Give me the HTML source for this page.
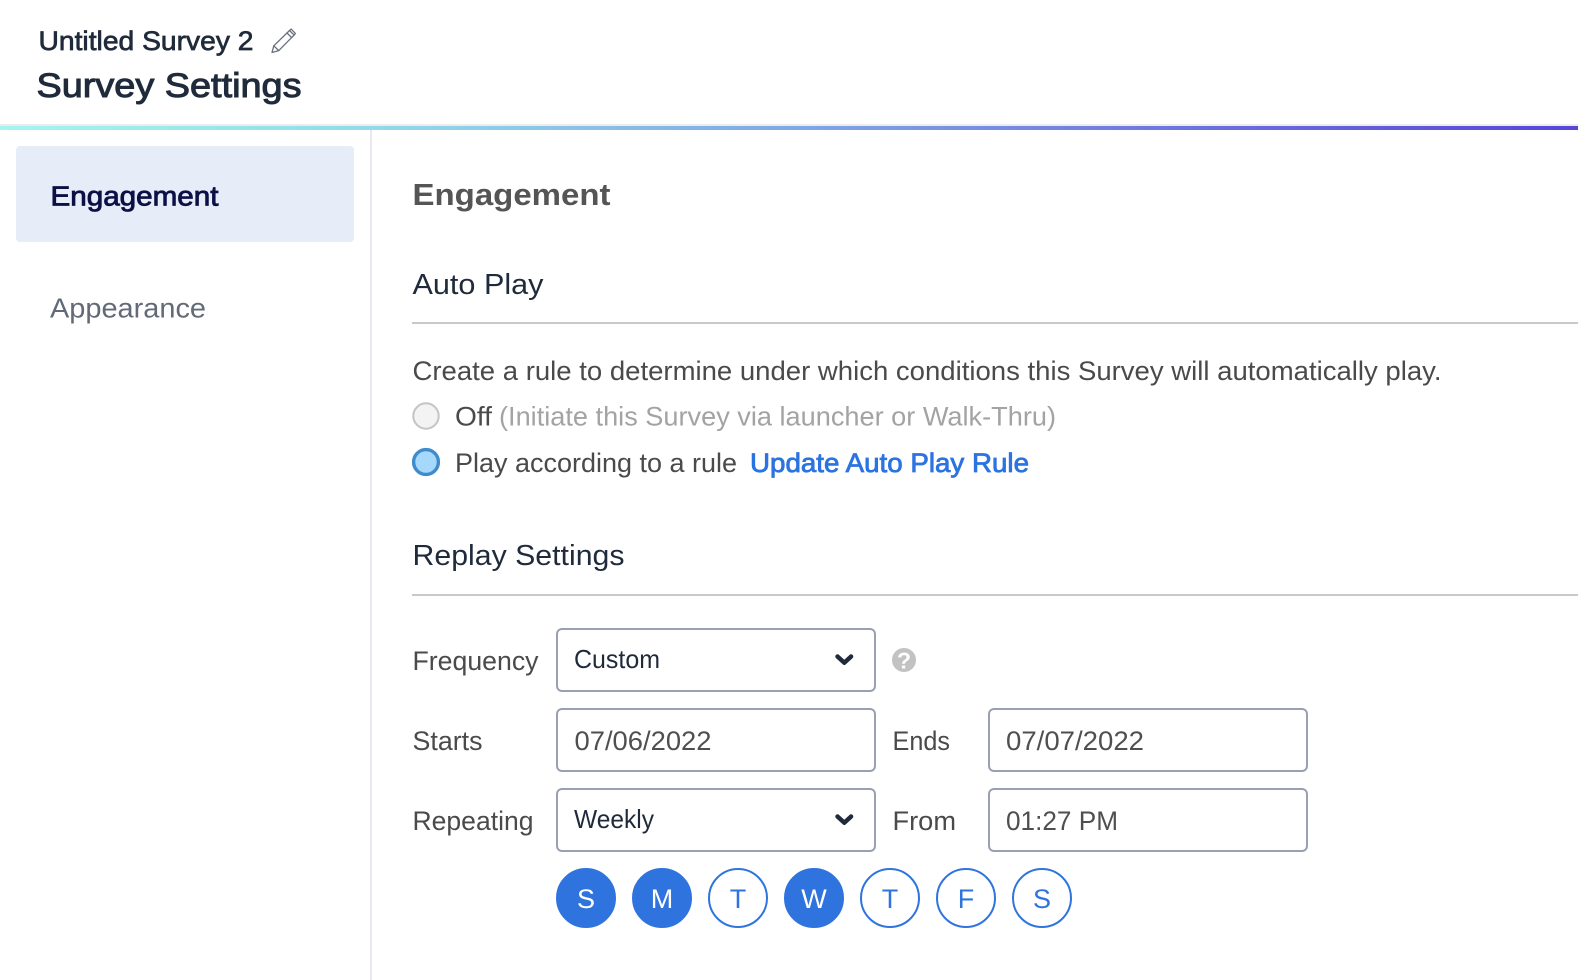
<!DOCTYPE html>
<html lang="en">
<head>
<meta charset="utf-8">
<title>Survey Settings</title>
<style>
html,body{margin:0;padding:0;background:#fff;width:1578px;height:980px;overflow:hidden}
svg{display:block}
text{font-family:"Liberation Sans",sans-serif;font-size:27px;fill:#4a4a4a}
.semi{stroke-width:.55px;paint-order:stroke}
</style>
</head>
<body>
<svg width="1578" height="980" viewBox="0 0 1578 980" xmlns="http://www.w3.org/2000/svg">
<defs>
<linearGradient id="bar" x1="0" x2="1" y1="0" y2="0">
<stop offset="0" stop-color="#a3f6ee"/>
<stop offset=".25" stop-color="#90d8e9"/>
<stop offset=".5" stop-color="#80a8e5"/>
<stop offset=".8" stop-color="#6a68de"/>
<stop offset="1" stop-color="#5546d9"/>
</linearGradient>
</defs>

<!-- Header -->
<text x="38.5" y="50" lengthAdjust="spacingAndGlyphs" textLength="215" class="semi" style="font-size:27px;fill:#1f2a3a;stroke:#1f2a3a;stroke-width:.7px">Untitled Survey 2</text>
<g fill="none" stroke="#6b7080" stroke-width="1.3" stroke-linejoin="round" stroke-linecap="round">
<path d="M272 52.5l1.8-6.7L289.5 30.5l4.6 4.6L278.8 50.6z"/>
<path d="M273.8 45.8l5 4.8M287 33l4.6 4.6M289.5 30.5l1.6-1.4 4.3 4.3-1.3 1.7"/>
</g>
<text x="36.5" y="97" lengthAdjust="spacingAndGlyphs" textLength="265" class="semi" style="font-size:34px;fill:#1f2a3a;stroke:#1f2a3a;stroke-width:1px">Survey Settings</text>

<rect x="0" y="124" width="1578" height="2" fill="#ececec"/>
<rect x="0" y="126" width="1578" height="4" fill="url(#bar)"/>

<!-- Sidebar -->
<rect x="370" y="130" width="2" height="850" fill="#e8e8ee"/>
<rect x="16" y="146" width="338" height="96" rx="4" fill="#e6ecf8"/>
<text x="50.5" y="205.5" lengthAdjust="spacingAndGlyphs" textLength="168" class="semi" style="font-size:28px;fill:#0b1145;stroke:#0b1145;stroke-width:.85px">Engagement</text>
<text x="50" y="317.5" lengthAdjust="spacingAndGlyphs" textLength="156" style="font-size:28px;fill:#626a78">Appearance</text>

<!-- Main -->
<text x="412.5" y="205" lengthAdjust="spacingAndGlyphs" textLength="198" style="font-size:31px;font-weight:bold;fill:#555">Engagement</text>

<text x="412.5" y="294" lengthAdjust="spacingAndGlyphs" textLength="131" style="font-size:29px;fill:#1f2a3a">Auto Play</text>
<rect x="412" y="322" width="1166" height="2" fill="#c9c9c9"/>

<text x="412.5" y="380" lengthAdjust="spacingAndGlyphs" textLength="1029" style="fill:#4a4a4a">Create a rule to determine under which conditions this Survey will automatically play.</text>

<circle cx="426" cy="416" r="12.7" fill="#f3f3f3" stroke="#c4c4c4" stroke-width="2"/>
<text x="455" y="425.5" lengthAdjust="spacingAndGlyphs" textLength="37" style="fill:#4a4a4a">Off</text>
<text x="499" y="425.5" lengthAdjust="spacingAndGlyphs" textLength="557" style="fill:#a3a3a3">(Initiate this Survey via launcher or Walk-Thru)</text>

<circle cx="426" cy="462" r="12.4" fill="#a6d8fc" stroke="#3f8ccd" stroke-width="3.4"/>
<text x="455" y="472" lengthAdjust="spacingAndGlyphs" textLength="282" style="fill:#4a4a4a">Play according to a rule</text>
<text x="750" y="472" lengthAdjust="spacingAndGlyphs" textLength="279" class="semi" style="fill:#2b73e0;stroke:#2b73e0;stroke-width:.8px">Update Auto Play Rule</text>

<text x="412.5" y="565" lengthAdjust="spacingAndGlyphs" textLength="212" style="font-size:29px;fill:#1f2a3a">Replay Settings</text>
<rect x="412" y="594" width="1166" height="2" fill="#c9c9c9"/>

<!-- Form -->
<text x="412.5" y="670" lengthAdjust="spacingAndGlyphs" textLength="126" style="fill:#4a4a4a">Frequency</text>
<rect x="557" y="629" width="318" height="62" rx="5" fill="#fff" stroke="#9a9fb1" stroke-width="2"/>
<text x="574" y="668" lengthAdjust="spacingAndGlyphs" textLength="86" style="font-size:26px;fill:#1f2a3a">Custom</text>
<path d="M837.5 656.5l6.8 6.3 6.8-6.3" fill="none" stroke="#1f2a3a" stroke-width="4.4" stroke-linecap="round" stroke-linejoin="round"/>
<circle cx="904" cy="660" r="12" fill="#c2c2c2"/>
<text x="904" y="668.5" text-anchor="middle" style="font-size:23px;font-weight:bold;fill:#fff">?</text>

<text x="412.5" y="750" lengthAdjust="spacingAndGlyphs" textLength="70" style="fill:#4a4a4a">Starts</text>
<rect x="557" y="709" width="318" height="62" rx="5" fill="#fff" stroke="#9a9fb1" stroke-width="2"/>
<text x="574.5" y="750" lengthAdjust="spacingAndGlyphs" textLength="137" style="fill:#4f4f4f">07/06/2022</text>
<text x="892.5" y="750" lengthAdjust="spacingAndGlyphs" textLength="57.5" style="fill:#4a4a4a">Ends</text>
<rect x="989" y="709" width="318" height="62" rx="5" fill="#fff" stroke="#9a9fb1" stroke-width="2"/>
<text x="1006" y="750" lengthAdjust="spacingAndGlyphs" textLength="138" style="fill:#4f4f4f">07/07/2022</text>

<text x="412.5" y="830" lengthAdjust="spacingAndGlyphs" textLength="121" style="fill:#4a4a4a">Repeating</text>
<rect x="557" y="789" width="318" height="62" rx="5" fill="#fff" stroke="#9a9fb1" stroke-width="2"/>
<text x="574" y="828" lengthAdjust="spacingAndGlyphs" textLength="80" style="font-size:26px;fill:#1f2a3a">Weekly</text>
<path d="M837.5 816.5l6.8 6.3 6.8-6.3" fill="none" stroke="#1f2a3a" stroke-width="4.4" stroke-linecap="round" stroke-linejoin="round"/>
<text x="892.5" y="830" lengthAdjust="spacingAndGlyphs" textLength="63.5" style="fill:#4a4a4a">From</text>
<rect x="989" y="789" width="318" height="62" rx="5" fill="#fff" stroke="#9a9fb1" stroke-width="2"/>
<text x="1006" y="830" lengthAdjust="spacingAndGlyphs" textLength="112" style="fill:#4f4f4f">01:27 PM</text>

<!-- Day circles -->
<g stroke="#2f74de" stroke-width="2">
<circle cx="586" cy="898" r="29" fill="#2f74de"/>
<circle cx="662" cy="898" r="29" fill="#2f74de"/>
<circle cx="738" cy="898" r="29" fill="#fff"/>
<circle cx="814" cy="898" r="29" fill="#2f74de"/>
<circle cx="890" cy="898" r="29" fill="#fff"/>
<circle cx="966" cy="898" r="29" fill="#fff"/>
<circle cx="1042" cy="898" r="29" fill="#fff"/>
</g>
<g text-anchor="middle">
<text x="586" y="908" style="fill:#fff">S</text>
<text x="662" y="908" style="fill:#fff">M</text>
<text x="738" y="908" style="fill:#2f74de">T</text>
<text x="814" y="908" style="fill:#fff">W</text>
<text x="890" y="908" style="fill:#2f74de">T</text>
<text x="966" y="908" style="fill:#2f74de">F</text>
<text x="1042" y="908" style="fill:#2f74de">S</text>
</g>
</svg>
</body>
</html>
